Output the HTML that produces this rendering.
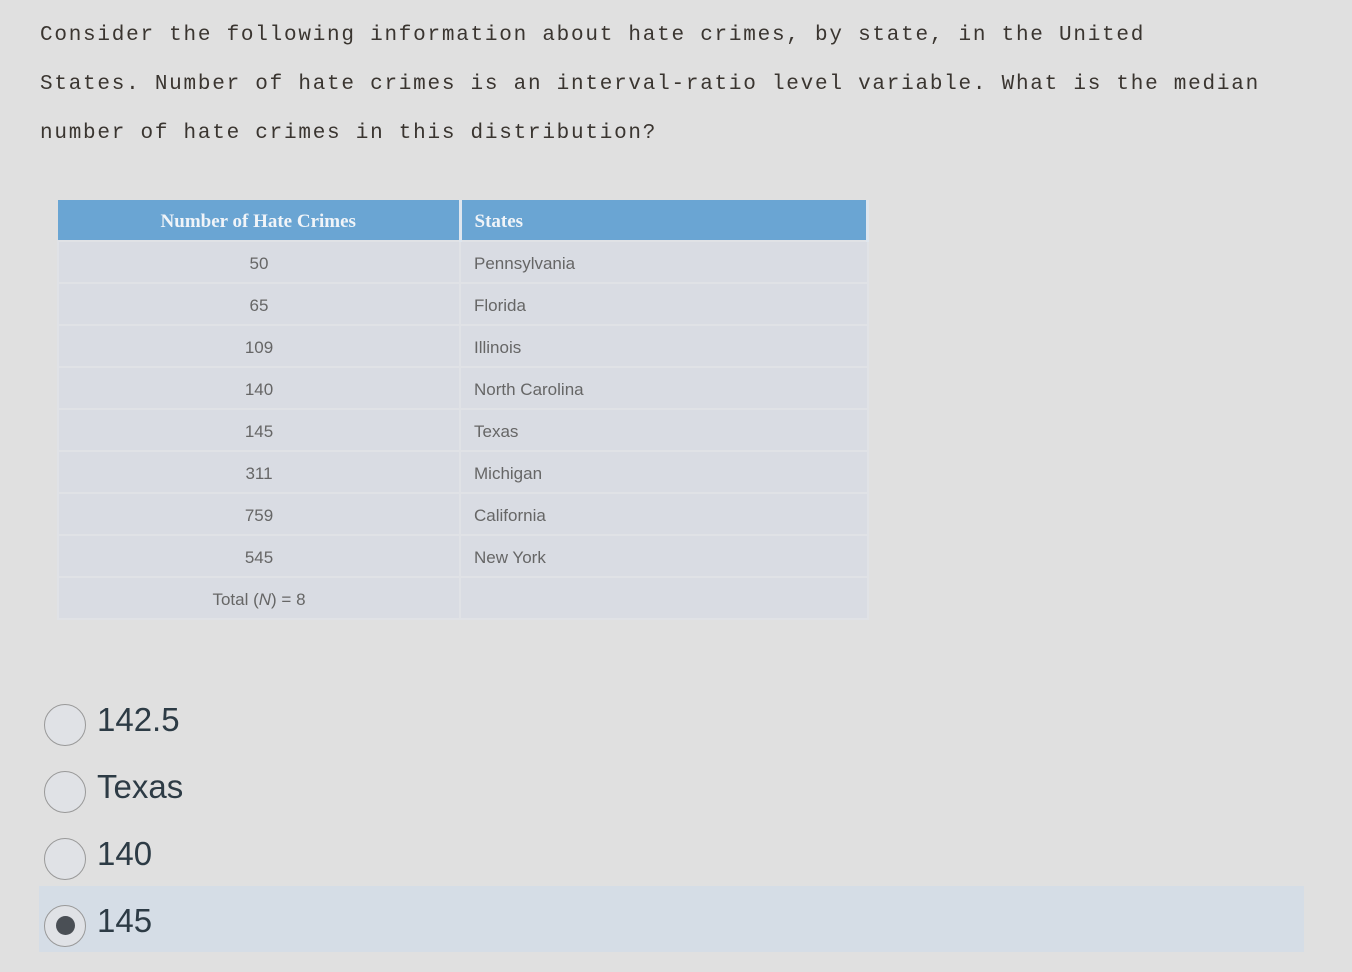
<!DOCTYPE html>
<html><head><style>
body{margin:0;width:1352px;height:972px;background:#e0e0e0;position:relative;overflow:hidden;font-family:"Liberation Sans",sans-serif}
.q{position:absolute;left:40px;top:11px;font-family:"Liberation Mono",monospace;font-size:21px;letter-spacing:1.75px;line-height:49px;color:#3a3530;white-space:pre}
table{position:absolute;left:57px;top:200px;width:812px;border-collapse:collapse}
td,th{padding:0;border:2px solid #e0e2e6}
th{background:#6aa5d3;color:#f0f4f8;font-family:"Liberation Serif",serif;font-size:19px;text-align:left;height:36px;border:none;border-right:3px solid #dfe6ee;padding-top:4px}
th:first-child{text-align:center}
td{background:#d9dce3;color:#666;font-size:17px;height:37px;padding-top:3px}
td:first-child{text-align:center;width:400px}
td:last-child{padding-left:13px}
th:last-child{padding-left:13px}
.o{position:absolute;left:44px;width:40px;height:40px;border:1px solid #999;border-radius:50%;background:#e0e2e6}
.t{position:absolute;left:97px;font-size:33px;color:#2d3b45}
.sel{position:absolute;left:39px;top:886px;width:1265px;height:66px;background:#d5dde6}
</style></head><body>
<div class="q">Consider the following information about hate crimes, by state, in the United
States. Number of hate crimes is an interval-ratio level variable. What is the median
number of hate crimes in this distribution?</div>
<table>
<tr><th>Number of Hate Crimes</th><th>States</th></tr>
<tr><td>50</td><td>Pennsylvania</td></tr>
<tr><td>65</td><td>Florida</td></tr>
<tr><td>109</td><td>Illinois</td></tr>
<tr><td>140</td><td>North Carolina</td></tr>
<tr><td>145</td><td>Texas</td></tr>
<tr><td>311</td><td>Michigan</td></tr>
<tr><td>759</td><td>California</td></tr>
<tr><td>545</td><td>New York</td></tr>
<tr><td>Total (<i>N</i>) = 8</td><td></td></tr>
</table>
<div class="sel"></div>
<div class="o" style="top:704px"></div><div class="t" style="top:701px">142.5</div>
<div class="o" style="top:771px"></div><div class="t" style="top:768px">Texas</div>
<div class="o" style="top:838px"></div><div class="t" style="top:835px">140</div>
<div class="o" style="top:905px"></div><div class="t" style="top:902px">145</div>
<div style="position:absolute;left:56px;top:916px;width:19px;height:19px;border-radius:50%;background:#4a4f55"></div>
</body></html>
